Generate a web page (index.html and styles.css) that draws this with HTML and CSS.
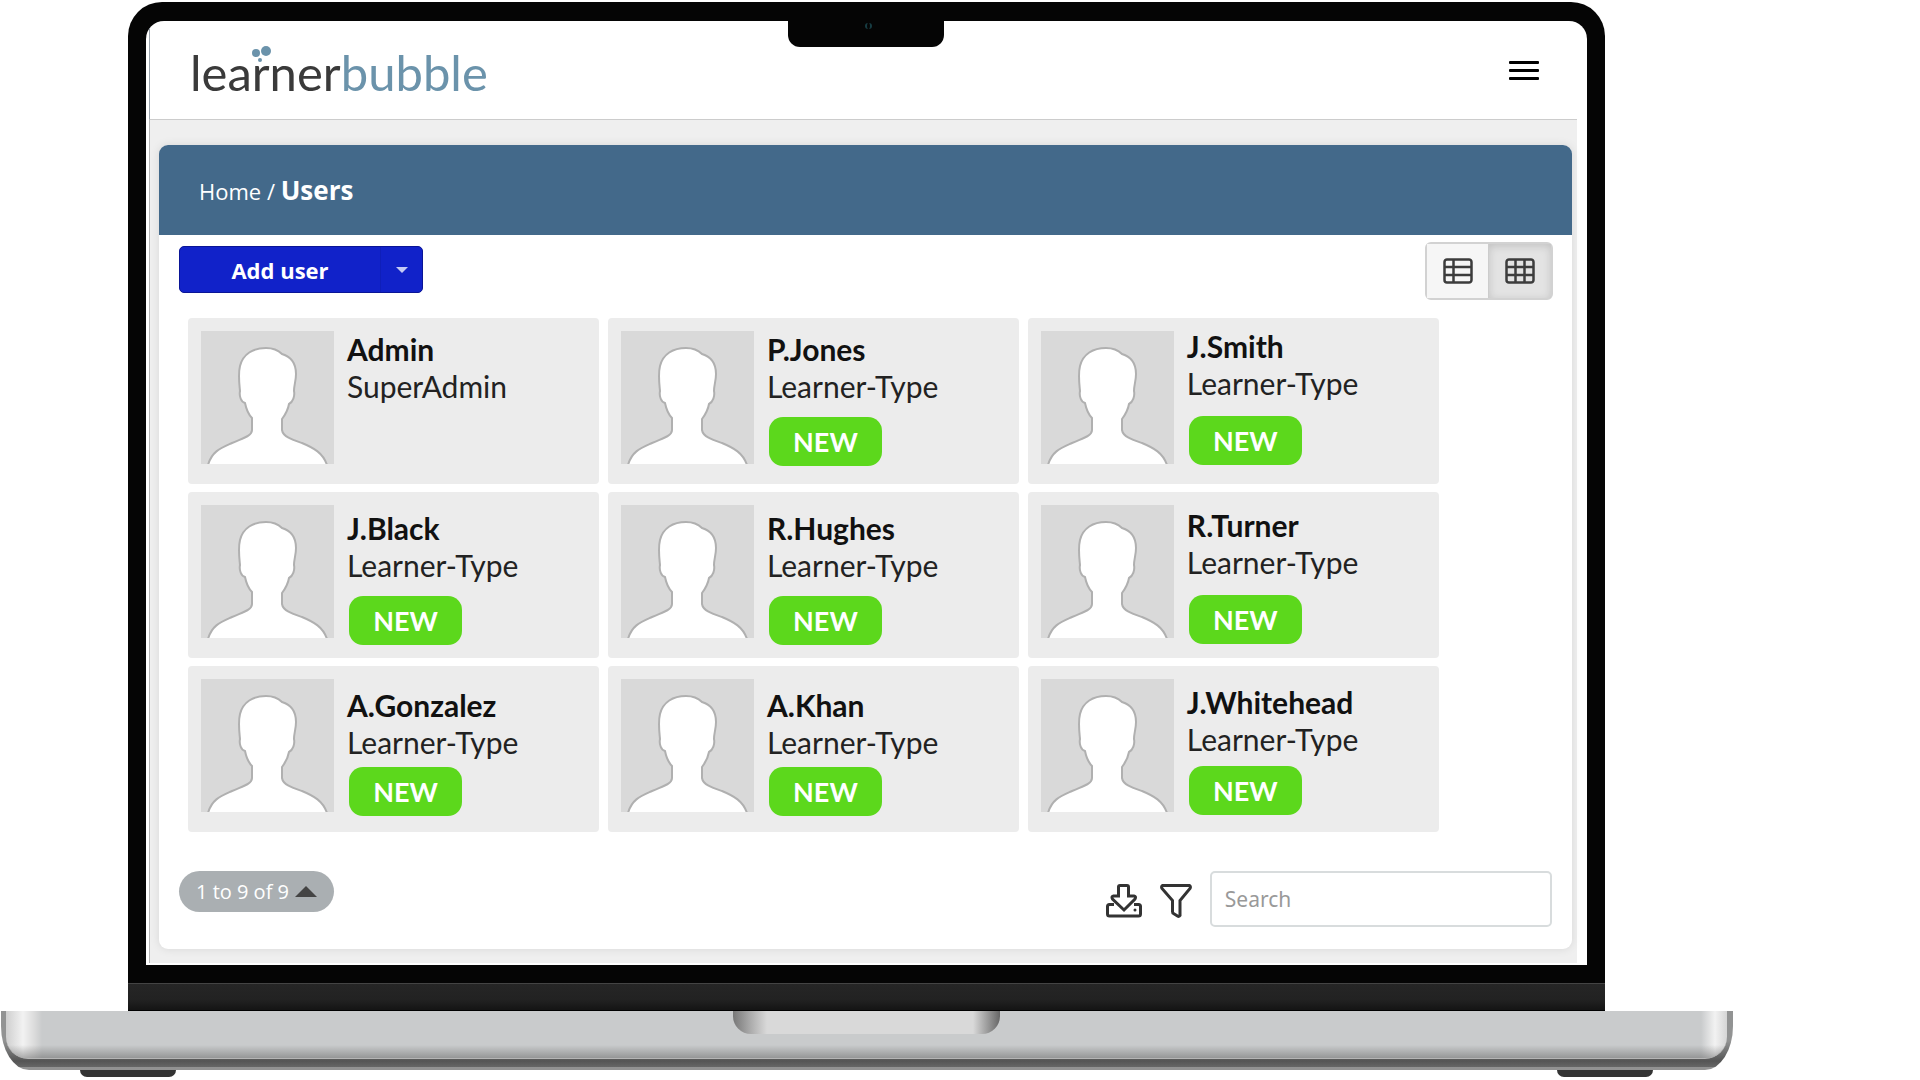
FILE: index.html
```html
<!DOCTYPE html>
<html lang="en">

<head>
  <meta charset="utf-8">
  <meta name="viewport" content="width=device-width, initial-scale=1.0">
  <title>Learnerbubble - Users</title>
  <link rel="stylesheet" href="styles.css">
</head>

<body>
  <!-- avatar shape used by every card -->
  <svg class="sprite" aria-hidden="true">
    <symbol id="avatar" viewBox="0 0 133 133">
      <path d="M7 134 C11 120 20 117 31 112 C42 107 51 105 51 99 L51 87 C47 83 45 77 44 72 C40 71 38 65 39 60 C38 50 37 43 39 35 C42 23 52 17 65 17 C73 17 77 19 81 23 C91 26 95 34 95 43 C95 50 93 54 93 60 C94 65 92 71 88 73 C87 79 84 84 81 88 L81 99 C82 106 92 109 101 112 C113 117 122 122 126 134 Z" fill="#fff" stroke="#b0b0b0" stroke-width="2"/>
    </symbol>
  </svg>

  <div class="laptop">
    <div class="lid">
      <div class="camera"><span></span></div>
      <div class="screen">
        <header class="topbar">
          <a href="#" class="logo" aria-label="learnerbubble">
            <svg class="dots" viewBox="0 0 20 16" aria-hidden="true">
              <circle cx="4" cy="7" r="4"/>
              <circle cx="14" cy="5" r="5"/>
              <circle cx="8" cy="14" r="2"/>
            </svg>
            <span class="learner">learner</span><span class="bubble">bubble</span>
          </a>
          <button class="menu" aria-label="Menu"><span></span><span></span><span></span></button>
        </header>

        <main class="page">
          <section class="panel">
            <nav class="breadcrumb"><a href="#">Home</a> / <h1>Users</h1></nav>

            <div class="toolbar">
              <div class="add-group">
                <button class="add">Add user</button>
                <button class="add-more" aria-label="More options"></button>
              </div>
              <div class="views">
                <button aria-label="List view">
                  <svg viewBox="0 0 30 26"><path d="M4 1.5h22a2.500 2.500 0 0 1 2.500 2.500v18a2.500 2.500 0 0 1-2.500 2.500H4A2.500 2.500 0 0 1 1.500 22V4A2.500 2.500 0 0 1 4 1.500zM1.500 9h27M1.500 17h27M10.500 1.500v23"/></svg>
                </button>
                <button class="active" aria-label="Grid view">
                  <svg viewBox="0 0 30 26"><path d="M4 1.500h22a2.500 2.500 0 0 1 2.500 2.500v18a2.500 2.500 0 0 1-2.500 2.500H4A2.500 2.500 0 0 1 1.500 22V4A2.500 2.500 0 0 1 4 1.500zM1.500 9h27M1.500 17h27M10.500 1.500v23M19.500 1.500v23"/></svg>
                </button>
              </div>
            </div>

            <div class="cards">
              <article class="card"><svg class="avatar"><use href="#avatar"/></svg><div class="info"><h2>Admin</h2><p>SuperAdmin</p></div></article>
              <article class="card"><svg class="avatar"><use href="#avatar"/></svg><div class="info"><h2>P.Jones</h2><p>Learner-Type</p><span class="badge">NEW</span></div></article>
              <article class="card"><svg class="avatar"><use href="#avatar"/></svg><div class="info"><h2>J.Smith</h2><p>Learner-Type</p><span class="badge">NEW</span></div></article>
              <article class="card"><svg class="avatar"><use href="#avatar"/></svg><div class="info"><h2>J.Black</h2><p>Learner-Type</p><span class="badge">NEW</span></div></article>
              <article class="card"><svg class="avatar"><use href="#avatar"/></svg><div class="info"><h2>R.Hughes</h2><p>Learner-Type</p><span class="badge">NEW</span></div></article>
              <article class="card"><svg class="avatar"><use href="#avatar"/></svg><div class="info"><h2>R.Turner</h2><p>Learner-Type</p><span class="badge">NEW</span></div></article>
              <article class="card"><svg class="avatar"><use href="#avatar"/></svg><div class="info"><h2>A.Gonzalez</h2><p>Learner-Type</p><span class="badge">NEW</span></div></article>
              <article class="card"><svg class="avatar"><use href="#avatar"/></svg><div class="info"><h2>A.Khan</h2><p>Learner-Type</p><span class="badge">NEW</span></div></article>
              <article class="card"><svg class="avatar"><use href="#avatar"/></svg><div class="info"><h2>J.Whitehead</h2><p>Learner-Type</p><span class="badge">NEW</span></div></article>
            </div>

            <div class="bottom">
              <button class="pager">1 to 9 of 9</button>
              <div class="tools">
                <button aria-label="Download">
                  <svg viewBox="0 0 36 34"><path d="M8 20.500H3.500A2 2 0 0 0 1.500 22.500V30A2 2 0 0 0 3.500 32H32.500A2 2 0 0 0 34.500 30V22.500A2 2 0 0 0 32.500 20.500H28M14 1.500H21A1.500 1.500 0 0 1 22.500 3V12H28Q30.500 12.500 29 15L18 26L6.500 15Q5 12.500 7.500 12H12.500V3A1.500 1.500 0 0 1 14 1.500Z"/><circle class="dot" cx="29" cy="26" r="1.500"/></svg>
                </button>
                <button class="filter" aria-label="Filter">
                  <svg viewBox="0 0 32 34"><path d="M2.500 1.500H29.500Q31 2.500 30 4.500L20 16.500V31.500Q19 33 17.500 32L13.500 29.500Q12.500 29 12.500 27.500V16.500L2 4.500Q1 2.500 2.500 1.500Z"/></svg>
                </button>
                <input type="text" placeholder="Search" aria-label="Search">
              </div>
            </div>
          </section>
        </main>
      </div>
    </div>
    <div class="hinge"></div>
    <div class="base">
      <div class="deck"><div class="lip"></div></div>
    </div>
    <div class="feet"><span></span><span></span></div>
  </div>
</body>

</html>
```
FILE: styles.css
```css
* {
  margin: 0;
  padding: 0;
  box-sizing: border-box;
}

body {
  background: #fff;
  font-family: 'Open Sans', 'Noto Sans', sans-serif;
}

button {
  font-family: inherit;
  border: none;
  background: none;
  cursor: pointer;
}

a {
  color: inherit;
  text-decoration: none;
}

.sprite {
  display: none;
}

/* Laptop frame */
.laptop {
  width: 90.25%;
  min-width: 1280px;
  padding: 2px 0 0 1px;
}

.lid {
  position: relative;
  margin: 0 128px 0 127px;
  padding: 19px 18px 18px;
  background: #050505;
  border-radius: 34px 34px 0 0;
}

.camera {
  position: absolute;
  top: 0;
  left: 50%;
  width: 156px;
  height: 45px;
  margin-left: -78px;
  background: #050505;
  border-radius: 0 0 12px 12px;
}

.camera span {
  position: absolute;
  top: 21px;
  left: 77px;
  width: 7px;
  height: 6px;
  border: 1px solid #173c42;
  border-width: 0 2px;
  border-radius: 3px;
}

.hinge {
  height: 28px;
  margin: 0 128px 0 127px;
  border-top: 1px solid #444;
  border-bottom: 1px solid #000;
  background: linear-gradient(#262626, #222 60%, #141414);
}

.base {
  height: 59px;
  padding: 0 6px 12px 5px;
  border-radius: 0 0 28px 28px / 0 0 44px 44px;
  background: linear-gradient(#929393 0, #929393 30px, #555 50px, #666 56px, #929292 56px);
}

.deck {
  height: 48px;
  border-bottom: 1px solid #b5b5b5;
  border-radius: 0 0 22px 22px;
  background:
    linear-gradient(transparent 34px, rgba(90, 90, 90, 0.5) 48px),
    linear-gradient(90deg, #cfcfcf, #f2f2f2 17px, #dcdcdc 28px, #c9cbcc 36px, #c9cbcc calc(100% - 26px), #f2f2f2 calc(100% - 12px), #d5d5d5);
}

.lip {
  width: 267px;
  height: 23px;
  margin: 0 auto;
  border-radius: 0 0 18px 18px;
  background: linear-gradient(90deg, #777, #aaa 17px, #d9d9d9 34px, #d9d9d9 240px, #aaa 251px, #666);
}

.feet {
  display: flex;
  justify-content: space-between;
  padding: 0 80px 0 79px;
}

.feet span {
  width: 96px;
  height: 7px;
  border-radius: 0 0 8px 8px;
  background: #333;
}

/* Screen */
.screen {
  overflow: hidden;
  padding: 0 10px 2px 3px;
  background: #fff;
  border-radius: 18px 18px 0 0;
}

.topbar {
  display: flex;
  align-items: center;
  justify-content: space-between;
  height: 99px;
  padding: 0 38px 0 40px;
  border-left: 1px solid #9aa3ab;
  border-bottom: 1px solid #ccc;
}

.logo {
  position: relative;
  padding-top: 4px;
  font-family: Lato, sans-serif;
  font-size: 49px;
  line-height: 56px;
}

.learner {
  color: #3a3a3a;
}

.bubble {
  color: #6b93ab;
}

.dots {
  position: absolute;
  top: 6px;
  left: 62px;
  width: 20px;
  height: 16px;
  fill: #6b93ab;
}

.menu {
  display: flex;
  flex-direction: column;
  gap: 5px;
}

.menu span {
  width: 30px;
  height: 3px;
  border-radius: 1px;
  background: #000;
}

.page {
  padding: 25px 5px 14px 9px;
  border-left: 1px solid #b5b5b5;
  background: #efefef;
}

.panel {
  padding-bottom: 22px;
  border-radius: 9px;
  background: #fff;
  box-shadow: 0 0 10px rgba(0, 0, 0, 0.1);
}

.breadcrumb {
  height: 90px;
  padding: 0 40px;
  border-radius: 9px 9px 0 0;
  background: #43698a;
  color: #fff;
  font-size: 22px;
  line-height: 90px;
}

.breadcrumb h1 {
  display: inline;
  font-size: 26px;
}

.toolbar {
  display: flex;
  justify-content: space-between;
  align-items: flex-start;
  padding: 7px 19px 0 20px;
}

.add-group {
  display: flex;
  width: 244px;
  height: 47px;
  margin-top: 4px;
  border: 1px solid #0a1596;
  border-radius: 5px;
  background: #1122c9;
}

.add {
  flex: 1;
  color: #fff;
  font-size: 22px;
  font-weight: bold;
}

.add-more {
  width: 42px;
  border-left: 1px solid #0f1fb9;
}

.add-more::before {
  content: '';
  display: block;
  width: 0;
  margin: 0 auto;
  border: 6px solid transparent;
  border-top-color: #c5cbf5;
  border-bottom: none;
}

.views {
  display: flex;
  width: 128px;
  height: 58px;
  border: 2px solid #d2d2d2;
  border-radius: 6px;
}

.views button {
  flex: 1;
  background: #f6f6f6;
}

.views .active {
  border-left: 1px solid #ccc;
  background: #e3e3e3;
  box-shadow: inset 0 2px 8px rgba(0, 0, 0, 0.15);
}

.views svg {
  display: block;
  width: 30px;
  height: 26px;
  margin: 0 auto;
  fill: none;
  stroke: #3c3c3c;
  stroke-width: 2.5;
}

/* User cards */
.cards {
  display: grid;
  grid-template-columns: repeat(3, 1fr);
  gap: 8px 9px;
  padding: 18px 133px 0 29px;
}

.card {
  display: flex;
  gap: 13px;
  height: 166px;
  padding: 13px;
  border-radius: 4px;
  background: #ececec;
}

.avatar {
  flex: none;
  width: 133px;
  height: 133px;
  background: #d9d9d9;
}

.info {
  font-family: Lato, sans-serif;
}

.info h2,
.info p {
  font-size: 30px;
  line-height: 37px;
}

.info h2 {
  color: #111;
}

.info p {
  color: #222;
}

.card:nth-child(n+4) .info {
  padding-top: 5px;
}

.card:nth-child(n+7) .info {
  padding-top: 8px;
}

.badge {
  display: block;
  width: 113px;
  height: 49px;
  margin: 12px 0 0 2px;
  border-radius: 14px;
  background: #5cd81c;
  color: #fff;
  font-size: 27px;
  font-weight: bold;
  line-height: 49px;
  text-align: center;
}

.card:nth-child(n+7) .badge {
  margin-top: 6px;
}

/* last column sits slightly higher */
.card:nth-child(3n) h2 {
  margin-top: -3px;
}

.card:nth-child(3n) p {
  padding-bottom: 2px;
}

/* Pager and search */
.bottom {
  display: flex;
  justify-content: space-between;
  align-items: flex-start;
  padding: 39px 20px 0;
}

.pager {
  display: flex;
  align-items: center;
  gap: 6px;
  height: 41px;
  padding: 0 17px;
  border-radius: 21px;
  background: #aaafb2;
  color: #fff;
  font-size: 20px;
}

.pager::after {
  content: '';
  border: 11px solid transparent;
  border-top: none;
  border-bottom-color: #444;
}

.tools {
  display: flex;
  align-items: center;
  gap: 18px;
}

.tools button {
  padding-top: 4px;
}

.tools svg {
  display: block;
  width: 36px;
  height: 34px;
  fill: none;
  stroke: #333;
  stroke-width: 3;
}

.tools .filter svg {
  width: 32px;
}

.tools .dot {
  fill: #333;
  stroke: none;
}

.tools input {
  width: 342px;
  height: 56px;
  padding: 0 13px;
  border: 2px solid #d8dcdd;
  border-radius: 5px;
  font-family: 'Noto Sans', sans-serif;
  font-size: 21px;
}

.tools input::placeholder {
  color: #999;
}
```
